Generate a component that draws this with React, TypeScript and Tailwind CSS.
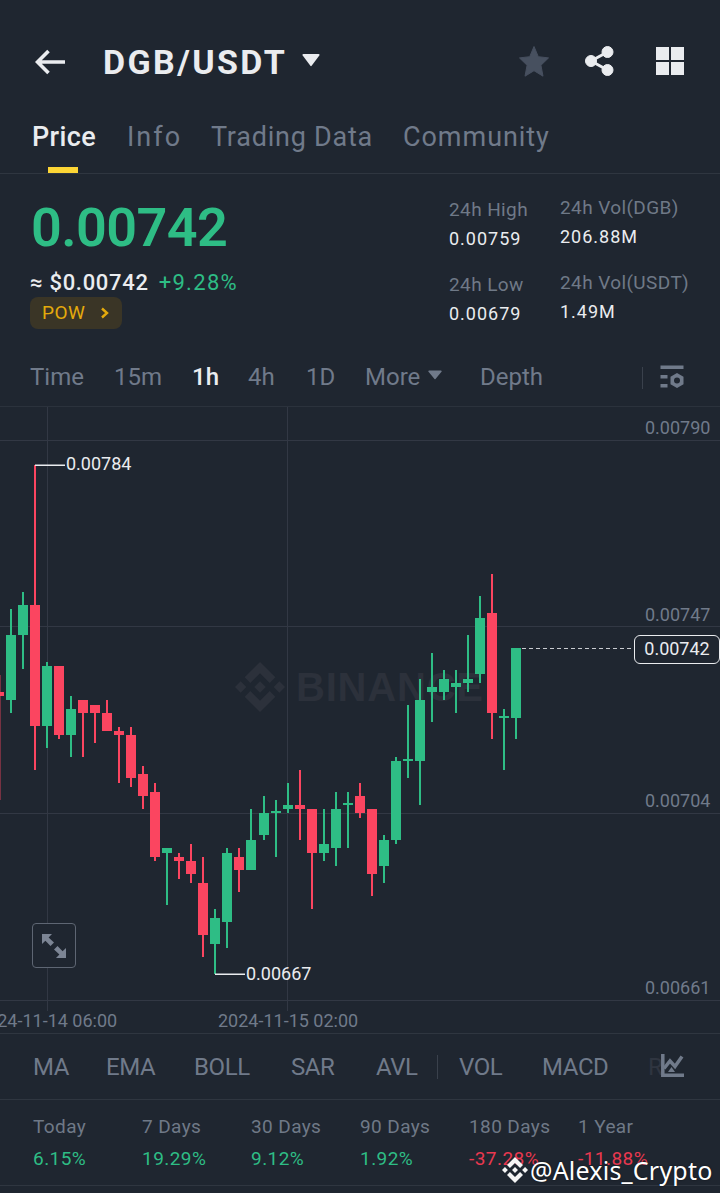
const G = "#2ebd85";
const R = "#fb4560";
// x, wickTop, wickBottom, bodyTop, bodyBottom, up
const candles: [number, number, number, number, number, number][] = [
  [11, 609, 713, 635, 700, 1], [23, 592, 669, 605, 635, 1], [35, 465, 770, 605, 726, 0], [47, 662, 748, 666, 726, 1],
  [59, 666, 739, 666, 735, 0], [71, 696, 757, 709, 735, 1], [83, 700, 757, 700, 713, 0], [95, 705, 743, 705, 713, 0],
  [107, 700, 731, 713, 731, 0], [119, 727, 783, 731, 735, 0], [131, 727, 787, 735, 778, 0], [143, 766, 809, 774, 796, 0],
  [155, 783, 861, 792, 857, 0], [167, 848, 905, 848, 853, 1], [179, 853, 879, 857, 861, 0], [191, 844, 883, 861, 874, 0],
  [203, 857, 957, 883, 935, 0], [215, 909, 974, 918, 944, 1], [227, 848, 948, 853, 922, 1], [239, 848, 892, 857, 870, 0],
  [251, 809, 870, 840, 870, 1], [264, 796, 840, 813, 835, 1], [276, 800, 857, 811, 813, 1], [288, 783, 813, 805, 809, 1],
  [300, 770, 840, 805, 809, 0], [312, 809, 909, 809, 853, 0], [324, 809, 861, 844, 853, 1], [336, 792, 866, 809, 848, 1],
  [348, 792, 848, 803, 805, 1], [360, 783, 818, 796, 813, 0], [372, 809, 896, 809, 874, 0], [384, 835, 883, 840, 866, 1],
  [396, 757, 844, 761, 840, 1], [408, 705, 778, 759, 761, 1], [420, 679, 805, 700, 761, 1], [432, 653, 722, 687, 692, 1],
  [444, 670, 700, 679, 692, 1], [456, 670, 713, 683, 687, 1], [468, 635, 692, 679, 683, 1], [480, 596, 683, 618, 674, 1],
  [492, 574, 739, 613, 713, 0], [504, 709, 770, 716, 718, 1], [516, 648, 739, 648, 718, 1],
];

function Logo({ className, fill }: { className: string; fill: string }) {
  return (
    <svg viewBox="0 0 126.61 126.61" className={className} fill={fill}>
      <path d="M38.73 53.2l24.59-24.58 24.6 24.6 14.3-14.31L63.32 0 24.42 38.9z" />
      <path d="M0 63.31l14.3-14.31 14.31 14.31-14.31 14.3z" />
      <path d="M38.73 73.41l24.59 24.59 24.6-24.6 14.31 14.29-38.9 38.91-38.91-38.88v-.03z" />
      <path d="M98 63.31l14.3-14.31 14.31 14.3-14.31 14.32z" />
      <path d="M77.83 63.3L63.32 48.78 52.59 59.51l-1.24 1.23-2.54 2.54 14.51 14.5 14.51-14.47z" />
    </svg>
  );
}

function Stat({ label, value, w, up }: { label: string; value: string; w: string; up?: boolean }) {
  return (
    <div className={`flex flex-col ${w} ${up ? "-mt-[2px]" : ""}`}>
      <span className="text-[19px] leading-[26px] text-[#6f7987] tracking-[0.4px] whitespace-nowrap">{label}</span>
      <span className="mt-[3px] text-[18px] leading-[26px] text-[#eaecef] tracking-[1px]">{value}</span>
    </div>
  );
}

function Perf({ label, value, red }: { label: string; value: string; red?: boolean }) {
  return (
    <div className="flex w-[109px] shrink-0 flex-col">
      <span className="text-[19px] leading-[24px] text-[#6f7987] tracking-[0.4px] whitespace-nowrap">{label}</span>
      <span className={`mt-[8px] text-[19px] leading-[24px] tracking-[0.45px] whitespace-nowrap ${red ? "text-[#e8384f]" : "text-[#2ebd85]"}`}>{value}</span>
    </div>
  );
}

function AxisLabel({ className, children }: { className: string; children: string }) {
  return <span className={`absolute text-[18px] leading-[24px] whitespace-nowrap ${className}`}>{children}</span>;
}

export default function App() {
  return (
    <div className="relative h-[1193px] w-[720px] overflow-hidden bg-[#1f2630] font-['Roboto',sans-serif]">
      {/* top bar */}
      <div className="flex h-[124px] items-center pl-[35px] pr-[36px]">
        <svg width="30" height="26" viewBox="0 0 30 26" fill="none" stroke="#eaecef" strokeWidth="3.6" className="mb-[1px]">
          <path d="M30 13H3M13.5 2L2.5 13l11 11" />
        </svg>
        <span className="ml-[38px] w-[182px] whitespace-nowrap text-[34px] font-bold leading-none tracking-[2.4px] text-[#eaecef]">DGB/USDT</span>
        <svg width="18" height="14" viewBox="0 0 18 14" className="ml-[17px] mb-[4px]" fill="#eaecef">
          <path d="M1.5 1h15a1 1 0 0 1 .8 1.5L9.8 12.6a1 1 0 0 1-1.6 0L.7 2.5A1 1 0 0 1 1.5 1z" />
        </svg>
        <svg width="30" height="31" viewBox="0 0 32 31" className="ml-auto mb-[2px]" preserveAspectRatio="none" fill="#47505f">
          <path d="M16 .5l4.6 10.2 10.9 1.2-8.1 7.4 2.2 10.9L16 24.7l-9.600 5.500 2.200-10.900-8.100-7.400 10.900-1.200z" stroke="#47505f" strokeWidth="1" strokeLinejoin="round" />
        </svg>
        <svg width="30" height="30" viewBox="0 0 30 30" className="ml-[35px] mb-[2px]" fill="#eaecef" stroke="#eaecef">
          <circle cx="7" cy="15" r="5.500" />
          <circle cx="23.500" cy="6" r="5.500" />
          <circle cx="23.500" cy="24" r="5.500" />
          <path d="M7 15L23.500 6M7 15l16.500 9" strokeWidth="3" fill="none" />
        </svg>
        <div className="ml-[42px] mb-[3px] grid grid-cols-2 gap-[2px]">
          <div className="h-[13px] w-[13px] bg-[#eaecef]" />
          <div className="h-[13px] w-[13px] bg-[#eaecef]" />
          <div className="h-[13px] w-[13px] bg-[#eaecef]" />
          <div className="h-[13px] w-[13px] bg-[#eaecef]" />
        </div>
      </div>

      {/* tabs */}
      <div className="flex h-[50px] border-b border-[#2f3640] pl-[32px] text-[27px] leading-[26px] tracking-[0.75px] text-[#707a8a]">
        <div className="relative w-[95px] font-medium tracking-[0.35px] text-[#eaecef]">
          Price
          <div className="absolute left-[16px] top-[43px] h-[6px] w-[30px] bg-[#fcd535]" />
        </div>
        <div className="w-[84px] tracking-[2px]">Info</div>
        <div className="w-[192px]">Trading Data</div>
        <div className="tracking-[0.95px]">Community</div>
      </div>

      {/* stats */}
      <div className="flex h-[178px] pl-[30px]">
        <div className="w-[419px]">
          <div className="mt-[21px] pl-[1px] text-[54px] font-semibold leading-[66px] tracking-[-0.6px] text-[#2ebd85]">0.00742</div>
          <div className="mt-[8px] flex items-center text-[22px] leading-[28px] tracking-[0.7px]">
            <span className="font-medium text-[#eaecef]">≈ $0.00742</span>
            <span className="ml-[10px] tracking-[1.3px] text-[#2ebd85]">+9.28%</span>
          </div>
          <div className="flex h-[32px] w-[92px] items-center rounded-[8px] bg-[#3a3526] pl-[12px] text-[19px] tracking-[0.5px] text-[#e4aa0c]">
            POW
            <svg width="10" height="12" viewBox="0 0 10 12" fill="none" stroke="#e4aa0c" strokeWidth="2.400" className="ml-[15px]">
              <path d="M2 1.500L7 6l-5 4.500" />
            </svg>
          </div>
        </div>
        <div className="mt-[23px] grid h-fit grid-cols-[111px_1fr] gap-y-[20px]">
          <Stat w="w-[111px]" label="24h High" value="0.00759" />
          <Stat w="w-[150px]" up label="24h Vol(DGB)" value="206.88M" />
          <Stat w="w-[111px]" label="24h Low" value="0.00679" />
          <Stat w="w-[150px]" up label="24h Vol(USDT)" value="1.49M" />
        </div>
      </div>

      {/* intervals */}
      <div className="flex h-[54px] items-center pb-[4px] pl-[30px] text-[24px] leading-none text-[#707a8a]">
        <span className="w-[84px]">Time</span>
        <span className="w-[78px]">15m</span>
        <span className="w-[56px] font-medium text-[#eaecef]">1h</span>
        <span className="w-[58px]">4h</span>
        <span className="w-[59px]">1D</span>
        <span className="w-[63px]">More</span>
        <svg width="14" height="10" viewBox="0 0 14 10" fill="#707a8a" className="mb-[5px]"><path d="M1 .5h12a.7.7 0 0 1 .5 1.200L7.500 9a.7.7 0 0 1-1 0L.5 1.700A.7.7 0 0 1 1 .5z" /></svg>
        <span className="ml-[38px] w-[162px]">Depth</span>
        <div className="mt-[2px] h-[22px] w-px bg-[#3a414c]" />
        <svg width="25" height="25" viewBox="0 0 25 25" fill="#707a8a" className="ml-[17px]">
          <rect x="0.500" y="0.500" width="23" height="3.500" />
          <rect x="0.500" y="10" width="7" height="3.500" />
          <rect x="0.500" y="19" width="7" height="3.500" />
          <path fillRule="evenodd" d="M17 8l6.500 3.700v7.600L17 23l-6.500-3.700v-7.600zM17 12.500a3 3 0 1 0 0 6 3 3 0 0 0 0-6z" />
        </svg>
      </div>

      {/* chart */}
      <div className="relative h-[627px] overflow-hidden border-t border-[#2b323c]">
        <div className="absolute left-[235px] top-[255px] flex items-center">
          <Logo className="h-[50px] w-[50px]" fill="#2c313b" />
          <span className="ml-[11px] font-['Liberation_Sans',sans-serif] text-[40px] font-bold leading-none tracking-[0.8px] text-[#2c313b]">BINANCE</span>
        </div>
        <svg className="absolute left-0 top-[-1px] h-[627px] w-[720px]" viewBox="0 406 720 627">
          {[440, 626, 813, 1000].map((y) => (
            <rect key={y} x="0" y={y} width="720" height="1" fill="#323844" />
          ))}
          <rect x="47" y="406" width="1" height="605" fill="#323844" />
          <rect x="287" y="406" width="1" height="605" fill="#323844" />
          <rect x="0" y="675" width="1" height="125" fill={R} opacity="0.4" />
          <rect x="0" y="692" width="4" height="4" fill={R} />
          {candles.map(([x, wt, wb, bt, bb, up]) => (
            <g key={x} fill={up ? G : R}>
              <rect x={x - 1} y={wt} width="2" height={wb - wt} />
              <rect x={x - 5} y={bt} width="10" height={bb - bt} />
            </g>
          ))}
          <rect x="35" y="464.500" width="30" height="1.500" fill="#eaecef" />
          <rect x="215" y="973.500" width="30" height="1.500" fill="#eaecef" />
          <line x1="522" y1="648.500" x2="634" y2="648.500" stroke="#c9ccd1" strokeWidth="1" strokeDasharray="4 3" />
        </svg>

        <AxisLabel className="left-[645px] top-[9px] text-[#707a8a]">0.00790</AxisLabel>
        <AxisLabel className="left-[645px] top-[196px] text-[#707a8a]">0.00747</AxisLabel>
        <AxisLabel className="left-[645px] top-[382px] text-[#707a8a]">0.00704</AxisLabel>
        <AxisLabel className="left-[645px] top-[569px] text-[#707a8a]">0.00661</AxisLabel>
        <AxisLabel className="left-[66px] top-[45px] text-[#eaecef]">0.00784</AxisLabel>
        <AxisLabel className="left-[246px] top-[555px] text-[#eaecef]">0.00667</AxisLabel>
        <AxisLabel className="left-[-23px] top-[602px] text-[#707a8a]">2024-11-14 06:00</AxisLabel>
        <AxisLabel className="left-[218px] top-[602px] text-[#707a8a]">2024-11-15 02:00</AxisLabel>
        <div className="absolute left-[634px] top-[228px] flex h-[29px] w-[86px] items-center justify-center rounded-[6px] border border-[#eaecef] bg-[#1f2630] pb-[2px] text-[18px] text-[#eaecef]">
          0.00742
        </div>
        <div className="absolute left-[32px] top-[516px] flex h-[45px] w-[44px] items-center justify-center rounded-[4px] border border-[#5e6673] bg-[#1f2630]">
          <svg width="26" height="26" viewBox="0 0 26 26" fill="#7c8594">
            <path d="M1 1h10l-3.400 3.400L13 9.500 9.500 13 4.400 7.800 1 11z" />
            <path d="M25 25H15l3.400-3.400L13 16.500l3.500-3.500 5.100 5.200L25 15z" />
          </svg>
        </div>
      </div>

      {/* indicators */}
      <div className="flex h-[66px] items-center border-t border-[#2f3640] pl-[33px] text-[24px] leading-none tracking-[-0.4px] text-[#707a8a]">
        <span className="w-[73px]">MA</span>
        <span className="w-[88px]">EMA</span>
        <span className="w-[97px]">BOLL</span>
        <span className="w-[85px]">SAR</span>
        <span className="w-[61px]">AVL</span>
        <div className="h-[24px] w-px bg-[#3a414c]" />
        <span className="ml-[21px] w-[83px]">VOL</span>
        <span className="w-[106px]">MACD</span>
        <span className="w-[13px] overflow-hidden text-[#2f3540]">R</span>
        <svg width="23" height="23" viewBox="0 0 23 23" fill="none" stroke="#707a8a" strokeWidth="3.500" className="mb-[2px]">
          <path d="M1.800 0v21.200H23" />
          <path d="M3 14.500L9 7l5 5.500 7-10" />
          <path d="M7 18h7l-3.500-5z" fill="#707a8a" stroke="none" />
        </svg>
      </div>

      {/* performance */}
      <div className="flex h-[87px] border-y border-[#2f3640] pl-[33px] pt-[15px]">
        <Perf label="Today" value="6.15%" />
        <Perf label="7 Days" value="19.29%" />
        <Perf label="30 Days" value="9.12%" />
        <Perf label="90 Days" value="1.92%" />
        <Perf label="180 Days" value="-37.28%" red />
        <Perf label="1 Year" value="-11.88%" red />
      </div>

      {/* watermark */}
      <div className="absolute left-[502px] top-[1153px] flex items-center">
        <Logo className="h-[26px] w-[26px]" fill="#f5f5f5" />
        <span className="ml-[2px] font-['Noto_Sans',sans-serif] text-[25px] leading-[34px] tracking-[0.2px] text-white [text-shadow:0_0_2px_rgba(0,0,0,0.6)]">@Alexis_Crypto</span>
      </div>
    </div>
  );
}
